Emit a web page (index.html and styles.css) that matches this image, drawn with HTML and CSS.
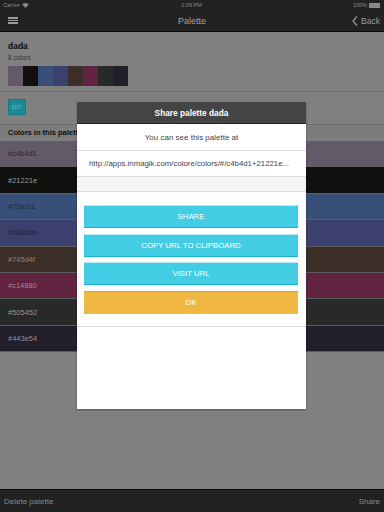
FILE: index.html
```html
<!DOCTYPE html>
<html lang="en">
<head>
    <meta charset="UTF-8">
    <meta name="viewport" content="width=device-width, initial-scale=1.0">
    <title>Palette</title>
    <link rel="stylesheet" href="styles.css">
</head>
<body>
    <div class="statusbar">
        <span class="carrier">Carrier
            <svg width="7" height="5" viewBox="0 0 14 10"><path d="M7 10 L0.5 3 A9.5 9.5 0 0 1 13.5 3 Z" fill="#8a8a8a"/></svg>
        </span>
        <span class="clock">1:09 PM</span>
        <span class="battery">100%
            <span class="battery-icon"></span>
        </span>
    </div>

    <div class="navbar">
        <div class="menu-btn">
            <span></span><span></span><span></span>
        </div>
        <div class="title">Palette</div>
        <div class="back-btn">
            <svg width="6" height="10" viewBox="0 0 6 10"><path d="M5 0.5 L1 5 L5 9.5" fill="none" stroke="#9a9a9a" stroke-width="1.2"/></svg>
            Back
        </div>
    </div>

    <div class="content">
        <div class="palette-info">
            <h2>dada</h2>
            <p>8 colors</p>
            <div class="swatches" id="swatches"></div>
        </div>
        <div class="edit-row">
            <span class="edit-btn">EDIT</span>
        </div>
        <div class="list-header">Colors in this palette</div>
        <div class="color-list" id="colorList"></div>
    </div>

    <div class="footer">
        <span>Delete palette</span>
        <span>Share</span>
    </div>

    <div class="modal">
        <div class="modal-header">Share palette dada</div>
        <div class="modal-msg">You can see this palette at</div>
        <div class="modal-url">http://apps.inmagik.com/colore/colors/#/c4b4d1+21221e...</div>
        <div class="modal-band"></div>
        <div class="modal-buttons">
            <div class="btn btn-calm">SHARE</div>
            <div class="btn btn-calm">COPY URL TO CLIPBOARD</div>
            <div class="btn btn-calm">VISIT URL</div>
            <div class="btn btn-energized">OK</div>
        </div>
    </div>

    <script>
        // colours as seen under the modal backdrop
        const colors = [
            { hex: '#c4b4d1', shade: '#625a68', text: '#2a2630' },
            { hex: '#21221e', shade: '#10110f', text: '#9a9a9a' },
            { hex: '#70a1f1', shade: '#385078', text: '#1c2a40' },
            { hex: '#7880db', shade: '#3c406d', text: '#1e2036' },
            { hex: '#745d4f', shade: '#3a2e27', text: '#8f8580' },
            { hex: '#c14880', shade: '#602440', text: '#a98394' },
            { hex: '#505452', shade: '#282a29', text: '#949594' },
            { hex: '#443e54', shade: '#221f2a', text: '#908e95' }
        ];

        const swatches = document.getElementById('swatches');
        const colorList = document.getElementById('colorList');

        colors.forEach(c => {
            swatches.innerHTML += `<span class="swatch" style="background:${c.shade}"></span>`;
            colorList.innerHTML += `<div class="color-row" style="background:${c.shade};color:${c.text}">${c.hex}</div>`;
        });
    </script>
</body>
</html>
```

FILE: styles.css
```css
body {
    font-family: "Liberation Sans", Arial, sans-serif;
    background-color: #808080;
    margin: 0;
    width: 384px;
    height: 512px;
    display: flex;
    flex-direction: column;
    overflow: hidden;
    position: relative;
}

.statusbar {
    height: 10px;
    background-color: #222;
    color: #8a8a8a;
    font-size: 5.5px;
    display: flex;
    align-items: center;
    justify-content: space-between;
    padding: 0 4px 0 3px;
}

.carrier, .battery {
    display: flex;
    align-items: center;
    gap: 2px;
    width: 40px;
}

.battery {
    justify-content: flex-end;
}

.battery-icon {
    width: 9px;
    height: 3px;
    background-color: #8a8a8a;
    border: 0.5px solid #8a8a8a;
}

.navbar {
    height: 21px;
    background-color: #222;
    border-bottom: 1px solid #0a0a0a;
    display: flex;
    align-items: center;
    padding: 0 4px 0 8px;
}

.menu-btn {
    width: 10px;
    display: flex;
    flex-direction: column;
    gap: 1.3px;
}

.menu-btn span {
    height: 1.3px;
    background-color: #9a9a9a;
}

.title {
    flex: 1;
    text-align: center;
    color: #a3a3a3;
    font-size: 9px;
    padding-left: 14px;
}

.back-btn {
    color: #9a9a9a;
    font-size: 8.5px;
    display: flex;
    align-items: center;
    gap: 3px;
}

.content {
    flex: 1;
}

.palette-info {
    padding: 9px 8px 5px;
    border-bottom: 1px solid #707070;
}

.palette-info h2 {
    margin: 0;
    font-size: 8.5px;
    color: #0d0d0d;
}

.palette-info p {
    margin: 3px 0 5px;
    font-size: 6.5px;
    color: #303030;
}

.swatches {
    display: flex;
    height: 20px;
}

.swatch {
    width: 15px;
}

.edit-row {
    height: 33px;
    padding: 7px 8px 0;
    box-sizing: border-box;
    border-bottom: 1px solid #707070;
}

.edit-btn {
    display: block;
    width: 18px;
    height: 16px;
    line-height: 15px;
    background-color: #1a8a96;
    border: 0.5px solid #157a85;
    box-sizing: border-box;
    color: #6fb8c0;
    font-size: 4.5px;
    text-align: center;
}

.list-header {
    height: 16px;
    padding: 3px 8px 0;
    box-sizing: border-box;
    font-size: 7.5px;
    font-weight: bold;
    color: #0d0d0d;
    background-color: #7c7c7c;
}

.color-row {
    height: 26.4px;
    box-sizing: border-box;
    border-bottom: 1px solid #5c5c5c;
    padding-left: 8px;
    font-size: 7.5px;
    display: flex;
    align-items: center;
}

.footer {
    height: 22px;
    background-color: #222;
    border-top: 1px solid #0a0a0a;
    color: #8a8a8a;
    font-size: 8px;
    display: flex;
    align-items: center;
    justify-content: space-between;
    padding: 0 4px;
}

.modal {
    position: absolute;
    left: 77px;
    top: 102px;
    width: 229px;
    height: 307px;
    background: white;
    box-shadow: 0 1px 2px rgba(0, 0, 0, 0.35);
}

.modal-header {
    height: 21px;
    background-color: #444;
    border-bottom: 1px solid #222;
    color: white;
    font-size: 8.3px;
    font-weight: bold;
    display: flex;
    align-items: center;
    justify-content: center;
}

.modal-msg {
    height: 27px;
    border-bottom: 1px solid #ddd;
    box-sizing: border-box;
    display: flex;
    align-items: center;
    justify-content: center;
    font-size: 8px;
    color: #444;
}

.modal-url {
    height: 26px;
    line-height: 25px;
    border-bottom: 1px solid #ddd;
    box-sizing: border-box;
    padding: 0 6px 0 12px;
    font-size: 7.8px;
    color: #444;
    white-space: nowrap;
}

.modal-band {
    height: 15px;
    background-color: #f4f4f4;
    border-bottom: 1px solid #ddd;
    box-sizing: border-box;
}

.modal-buttons {
    padding: 13px 8px 12px 7px;
    border-bottom: 1px solid #ddd;
    display: flex;
    flex-direction: column;
    gap: 5.5px;
}

.btn {
    height: 23px;
    box-sizing: border-box;
    color: white;
    font-size: 7.8px;
    display: flex;
    align-items: center;
    justify-content: center;
}

.btn-calm {
    background-color: #43cde4;
    border: 1px solid #43cde4;
    border-bottom-color: #17b3cc;
    border-top-color: #b9e9f2;
}

.btn-energized {
    background-color: #f0b843;
    border: 1px solid #f0b843;
    border-top-color: #e0a020;
}
```
